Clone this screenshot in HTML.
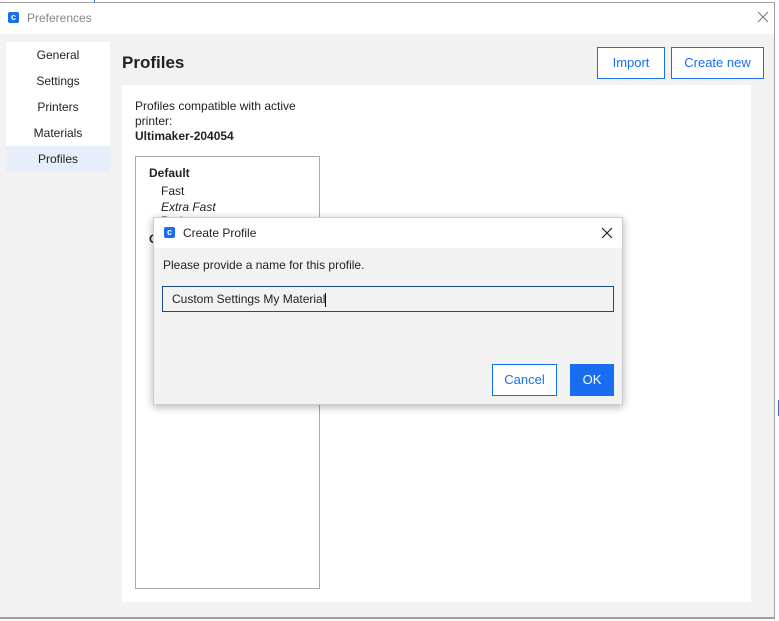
<!DOCTYPE html>
<html><head><style>
*{margin:0;padding:0;box-sizing:border-box}
body{width:779px;height:621px;background:#fff;font-family:"Liberation Sans","DejaVu Sans",sans-serif;font-size:12px;color:#222;position:relative;overflow:hidden}
.a{position:absolute}
.win{left:0;top:2px;width:775px;height:617px;border-top:1px solid #a0a0a0;border-right:1px solid #a0a0a0;border-bottom:2px solid #a0a0a0;background:#f2f2f2}
.tb{left:0;top:0;width:774px;height:31px;background:#fff}
.ic{width:11px;height:11px;background:#196ef0;border-radius:2px;color:#fff;font-size:9px;font-weight:bold;line-height:11px;text-align:center}
.side{left:6px;top:39px;width:104px;height:130px;background:#fff}
.it{position:absolute;left:0;width:104px;height:26px;line-height:26px;text-align:center;font-size:12px}
.btn{border:1px solid #196ef0;background:#fff;color:#196ef0;font-size:13px;text-align:center}
</style></head><body>
<div class="a" style="left:94px;top:0;width:1px;height:3px;background:#196ef0"></div>
<div class="a win">
 <div class="a tb">
  <div class="a ic" style="left:8px;top:9px">c</div>
  <div class="a" style="left:27px;top:8px;color:#888;font-size:12px">Preferences</div>
  <svg class="a" style="left:757px;top:8px" width="12" height="12"><path d="M1 1L11 11M11 1L1 11" stroke="#777" stroke-width="1"/></svg>
 </div>
 <div class="a side">
  <div class="it" style="top:0">General</div>
  <div class="it" style="top:26px">Settings</div>
  <div class="it" style="top:52px">Printers</div>
  <div class="it" style="top:78px">Materials</div>
  <div class="it" style="top:104px;background:#e5eefa">Profiles</div>
 </div>
 <div class="a" style="left:122px;top:50px;font-size:17px;font-weight:bold">Profiles</div>
 <div class="a btn" style="left:597px;top:44px;width:68px;height:32px;line-height:30px">Import</div>
 <div class="a btn" style="left:671px;top:44px;width:93px;height:32px;line-height:30px">Create new</div>
 <div class="a" style="left:122px;top:82px;width:629px;height:517px;background:#fff">
  <div class="a" style="left:13px;top:14px;line-height:15px;font-size:12px">Profiles compatible with active<br>printer:<br><b>Ultimaker-204054</b></div>
  <div class="a" style="left:13px;top:71px;width:185px;height:433px;border:1px solid #aaa">
   <div class="a" style="left:13px;top:9px;font-weight:bold">Default</div>
   <div class="a" style="left:25px;top:27px">Fast</div>
   <div class="a" style="left:25px;top:43px;font-style:italic">Extra Fast</div>
   <div class="a" style="left:25px;top:57px;height:5px;overflow:hidden">Project</div>
   <div class="a" style="left:13px;top:75px;font-weight:bold">C</div>
  </div>
 </div>
</div>
<div class="a" style="left:778px;top:400px;width:1px;height:16px;background:#196ef0"></div>
<div class="a" style="left:153px;top:217px;width:470px;height:188px;background:#f2f2f2;box-shadow:0 2px 8px rgba(0,0,0,.3);border:1px solid #ccc">
 <div class="a" style="left:0;top:0;width:468px;height:30px;background:#fff">
  <div class="a ic" style="left:10px;top:9px">c</div>
  <div class="a" style="left:29px;top:8px;font-size:12px">Create Profile</div>
  <svg class="a" style="left:447px;top:9px" width="12" height="12"><path d="M1 1L11 11M11 1L1 11" stroke="#222" stroke-width="1.2"/></svg>
 </div>
 <div class="a" style="left:9px;top:40px">Please provide a name for this profile.</div>
 <div class="a" style="left:8px;top:68px;width:452px;height:26px;border:1px solid #1c4a8c;background:#f2f2f2;padding-left:9px;line-height:24px">Custom Settings My Material<span style="display:inline-block;width:1px;height:14px;background:#000;vertical-align:middle"></span></div>
 <div class="a btn" style="left:338px;top:146px;width:65px;height:32px;line-height:30px">Cancel</div>
 <div class="a" style="left:416px;top:146px;width:44px;height:32px;line-height:32px;background:#196ef0;color:#fff;text-align:center;font-size:13px">OK</div>
</div>
</body></html>
